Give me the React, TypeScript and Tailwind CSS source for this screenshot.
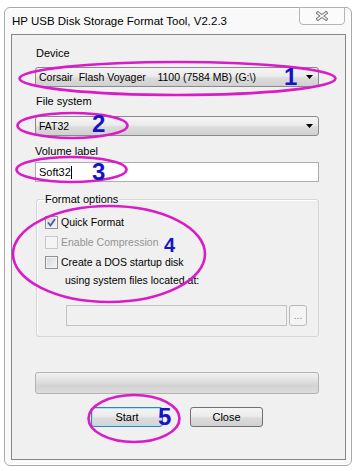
import React from "react";

function Combo({ value }: { value: string }) {
  return (
    <div className="flex h-[20px] w-[284px] items-center justify-between rounded-[3px] border border-[#8a8a8a] bg-[linear-gradient(#f4f4f4_0%,#ececec_45%,#dcdcdc_55%,#d0d0d0_100%)] pl-[3px] pr-[5px]">
      <span className="whitespace-pre text-[10.5px] leading-[13px]">{value}</span>
      <svg width="7" height="4" viewBox="0 0 7 4">
        <path d="M0 0h7L3.5 4z" fill="#000" />
      </svg>
    </div>
  );
}

function Check({ checked, disabled }: { checked?: boolean; disabled?: boolean }) {
  return (
    <span
      className={
        disabled
          ? "flex h-[13px] w-[13px] shrink-0 items-center justify-center border border-[#c8c8c8] bg-[#f4f4f4]"
          : "flex h-[13px] w-[13px] shrink-0 items-center justify-center border border-[#8e8f8f] bg-[linear-gradient(135deg,#d4d6d9,#f6f6f6)] shadow-[inset_0_0_0_1px_#f4f4f4]"
      }
    >
      {checked && (
        <svg width="9" height="9" viewBox="0 0 9 9">
          <path d="M1 4.5l2.5 3L8 1" fill="none" stroke="#4a5f97" strokeWidth="1.8" />
        </svg>
      )}
    </span>
  );
}

export default function App() {
  return (
    <div className="relative h-[471px] w-[358px] overflow-hidden bg-white pl-[4px] pt-[7px] font-['Liberation_Sans',Arial,sans-serif] text-[11px] text-black">
      <div className="flex h-[459px] w-[348px] flex-col rounded-[6px] border border-[#a8a8a8] bg-[#f9f9f9] shadow-[inset_0_0_0_1px_#ffffff]">
        {/* title bar */}
        <div className="flex h-[26px] items-start justify-between pl-[7px] pr-[6px]">
          <span className="pt-[6px] text-[11.5px] leading-[14px]">HP USB Disk Storage Format Tool, V2.2.3</span>
          <div className="-mt-[1px] flex h-[18px] w-[46px] items-center justify-center rounded-b-[4px] border border-[#b4b4b4] bg-[#fbfbfb]">
            <svg width="12" height="10" viewBox="0 0 12 10">
              <path d="M2 2l8 6M10 2l-8 6" stroke="#777" strokeWidth="3.4" strokeLinecap="square" />
              <path d="M2 2l8 6M10 2l-8 6" stroke="#fff" strokeWidth="1.4" strokeLinecap="square" />
            </svg>
          </div>
        </div>

        {/* client area */}
        <div className="ml-[6px] flex h-[426px] w-[335px] flex-col border border-[#858585] bg-[#f0f0f0] pl-[23px] pt-[12px]">
          <div className="ml-[1px] leading-[13px]">Device</div>
          <div className="mt-[7px]">
            <Combo value="Corsair  Flash Voyager    1100 (7584 MB) (G:\)" />
          </div>
          <div className="ml-[1px] mt-[8px] leading-[13px]">File system</div>
          <div className="mt-[8px]">
            <Combo value="FAT32" />
          </div>
          <div className="mt-[9px] leading-[13px]">Volume label</div>
          <div className="mt-[4px] flex h-[20px] w-[284px] items-center border border-[#abadb3] bg-white pl-[3px]">
            <span className="leading-[13px]">Soft32</span>
            <span className="h-[13px] w-[1px] bg-black" />
          </div>

          <fieldset className="ml-[1px] mt-[11px] w-[283px] rounded-[3px] border border-[#d5d5d5] px-[8px] pb-[10px] pt-[10px] shadow-[inset_1px_1px_0_#ffffff]">
            <legend className="-ml-[1px] px-[1px] leading-[13px]">Format options</legend>
            <div className="flex flex-col gap-[7px] text-[10.5px]">
              <div className="flex h-[13px] items-center gap-[3px]">
                <Check checked />
                <span className="leading-[13px]">Quick Format</span>
              </div>
              <div className="flex h-[13px] items-center gap-[3px]">
                <Check disabled />
                <span className="leading-[13px] text-[#939393]">Enable Compression</span>
              </div>
              <div className="flex h-[13px] items-center gap-[3px]">
                <Check />
                <span className="leading-[13px]">Create a DOS startup disk</span>
              </div>
            </div>
            <div className="mt-[5px] pl-[20px] text-[10.5px] leading-[13px]">using system files located at:</div>
            <div className="mt-[18px] flex gap-[2px] pl-[21px]">
              <div className="h-[21px] w-[221px] border border-[#c2c2c2] bg-[#f0f0f0]" />
              <div className="flex h-[21px] w-[18px] items-end justify-center rounded-[3px] border border-[#b9b9b9] bg-[#f4f4f4] pb-[4px] text-[10px] leading-[10px] text-[#8a8a8a]">
                ...
              </div>
            </div>
          </fieldset>

          <div className="mt-[35px] h-[22px] w-[284px] rounded-[3px] border border-[#b2b2b2] bg-[linear-gradient(#f2f2f2_0%,#e2e2e2_35%,#d3d3d3_65%,#dcdcdc_100%)]" />

          <div className="mt-[13px] flex w-[284px] justify-center gap-[27px]">
            <div className="flex h-[20px] w-[72px] items-center justify-center rounded-[3px] border border-[#3c7fb1] bg-[linear-gradient(#f4f4f4_0%,#ececec_45%,#dcdcdc_55%,#d4d4d4_100%)] shadow-[inset_0_0_0_1px_#a8e4f8] leading-[13px]">
              Start
            </div>
            <div className="flex h-[20px] w-[73px] items-center justify-center rounded-[3px] border border-[#707070] bg-[linear-gradient(#f4f4f4_0%,#ececec_45%,#dcdcdc_55%,#d0d0d0_100%)] leading-[13px]">
              Close
            </div>
          </div>
        </div>
      </div>

      {/* annotations */}
      <svg className="pointer-events-none absolute left-0 top-0" width="358" height="471" viewBox="0 0 358 471">
        <g fill="none" stroke="#d91cc8" strokeWidth="2.6">
          <ellipse cx="177.5" cy="78.5" rx="158" ry="16.5" />
          <ellipse cx="72.5" cy="125.5" rx="55" ry="12.5" />
          <ellipse cx="71.5" cy="169.5" rx="55" ry="12.5" />
          <ellipse cx="109" cy="254" rx="96" ry="48" />
          <ellipse cx="134" cy="418.5" rx="45.5" ry="23.5" />
        </g>
      </svg>
      <span className="absolute left-[284px] top-[67px] text-[24px] font-bold leading-[20px] text-[#1414c8]">1</span>
      <span className="absolute left-[92px] top-[114px] text-[24px] font-bold leading-[20px] text-[#1414c8]">2</span>
      <span className="absolute left-[92px] top-[162px] text-[24px] font-bold leading-[20px] text-[#1414c8]">3</span>
      <span className="absolute left-[164px] top-[236px] text-[20px] font-bold leading-[18px] text-[#1414c8]">4</span>
      <span className="absolute left-[158px] top-[407px] text-[24px] font-bold leading-[20px] text-[#1414c8]">5</span>
    </div>
  );
}
